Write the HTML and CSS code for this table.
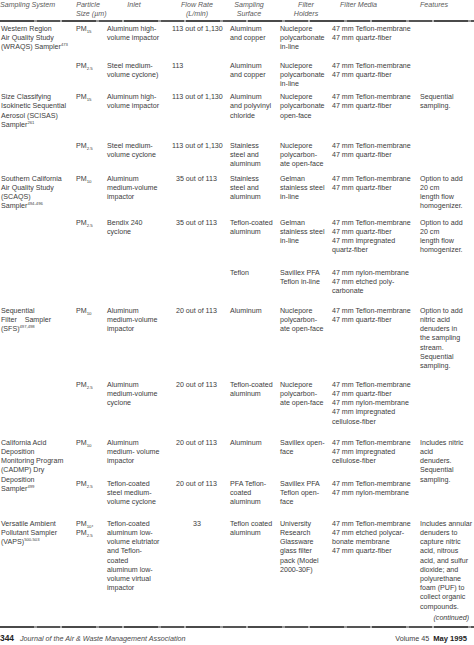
FILE: index.html
```html
<!DOCTYPE html>
<html>
<head>
<meta charset="utf-8">
<link rel="stylesheet" href="styles.css">
</head>
<body>
<div class="page">
  <div class="grid head">
    <div class="hc hs">Sampling System</div>
    <div class="hc hp">Particle<br>Size (µm)</div>
    <div class="hc hi">Inlet</div>
    <div class="hc hf">Flow Rate<br>(L/min)</div>
    <div class="hc hsu">Sampling<br>Surface</div>
    <div class="hc hh">Filter<br>Holders</div>
    <div class="hc hm">Filter Media</div>
    <div class="hc hfe">Features</div>
  </div>
  <div class="rule"></div>
  <div class="grid body">
    <!-- R1 -->
    <div class="c sys">Western Region<br>Air Quality Study<br>(WRAQS) Sampler<sup>473</sup></div>
    <div class="c">PM<sub>15</sub></div>
    <div class="c">Aluminum high-<br>volume impactor</div>
    <div class="c">113 out of 1,130</div>
    <div class="c">Aluminum<br>and copper</div>
    <div class="c">Nuclepore<br>polycarbonate<br>in-line</div>
    <div class="c">47 mm Teflon-membrane<br>47 mm quartz-fiber</div>
    <div class="c"></div>
    <!-- R2 -->
    <div class="c sys"></div>
    <div class="c">PM<sub>2.5</sub></div>
    <div class="c">Steel medium-<br>volume cyclone)</div>
    <div class="c">113</div>
    <div class="c">Aluminum<br>and copper</div>
    <div class="c">Nuclepore<br>polycarbonate<br>in-line</div>
    <div class="c">47 mm Teflon-membrane<br>47 mm quartz-fiber</div>
    <div class="c"></div>
    <!-- R3 -->
    <div class="c sys">Size Classifying<br>Isokinetic Sequential<br>Aerosol (SCISAS)<br>Sampler<sup>261</sup></div>
    <div class="c">PM<sub>15</sub></div>
    <div class="c">Aluminum high-<br>volume impactor</div>
    <div class="c">113 out of 1,130</div>
    <div class="c">Aluminum<br>and polyvinyl<br>chloride</div>
    <div class="c">Nuclepore<br>polycarbonate<br>open-face</div>
    <div class="c">47 mm Teflon-membrane<br>47 mm quartz-fiber</div>
    <div class="c">Sequential<br>sampling.</div>
    <!-- R4 -->
    <div class="c sys"></div>
    <div class="c">PM<sub>2.5</sub></div>
    <div class="c">Steel medium-<br>volume cyclone</div>
    <div class="c">113 out of 1,130</div>
    <div class="c">Stainless<br>steel and<br>aluminum</div>
    <div class="c">Nuclepore<br>polycarbon-<br>ate open-face</div>
    <div class="c">47 mm Teflon-membrane<br>47 mm quartz-fiber</div>
    <div class="c"></div>
    <!-- R5 -->
    <div class="c sys">Southern California<br>Air Quality Study<br>(SCAQS)<br>Sampler<sup>494-496</sup></div>
    <div class="c">PM<sub>10</sub></div>
    <div class="c">Aluminum<br>medium-volume<br>impactor</div>
    <div class="c ind">35 out of 113</div>
    <div class="c">Stainless<br>steel and<br>aluminum</div>
    <div class="c">Gelman<br>stainless steel<br>in-line</div>
    <div class="c">47 mm Teflon-membrane<br>47 mm quartz-fiber</div>
    <div class="c">Option to add<br>20 cm<br>length flow<br>homogenizer.</div>
    <!-- R6 -->
    <div class="c sys"></div>
    <div class="c">PM<sub>2.5</sub></div>
    <div class="c">Bendix 240<br>cyclone</div>
    <div class="c ind">35 out of 113</div>
    <div class="c">Teflon-coated<br>aluminum</div>
    <div class="c">Gelman<br>stainless steel<br>in-line</div>
    <div class="c">47 mm Teflon-membrane<br>47 mm quartz-fiber<br>47 mm impregnated<br>quartz-fiber</div>
    <div class="c">Option to add<br>20 cm<br>length flow<br>homogenizer.</div>
    <!-- R7 -->
    <div class="c sys"></div>
    <div class="c"></div>
    <div class="c"></div>
    <div class="c"></div>
    <div class="c">Teflon</div>
    <div class="c">Savillex PFA<br>Teflon in-line</div>
    <div class="c">47 mm nylon-membrane<br>47 mm etched poly-<br>carbonate</div>
    <div class="c"></div>
    <!-- R8 -->
    <div class="c sys">Sequential<br>Filter&nbsp;&nbsp;&nbsp;&nbsp;Sampler<br>(SFS)<sup>497,498</sup></div>
    <div class="c">PM<sub>10</sub></div>
    <div class="c">Aluminum<br>medium-volume<br>impactor</div>
    <div class="c ind">20 out of 113</div>
    <div class="c">Aluminum</div>
    <div class="c">Nuclepore<br>polycarbon-<br>ate open-face</div>
    <div class="c">47 mm Teflon-membrane<br>47 mm quartz-fiber</div>
    <div class="c">Option to add<br>nitric acid<br>denuders in<br>the sampling<br>stream.<br>Sequential<br>sampling.</div>
    <!-- R9 -->
    <div class="c sys"></div>
    <div class="c">PM<sub>2.5</sub></div>
    <div class="c">Aluminum<br>medium-volume<br>cyclone</div>
    <div class="c ind">20 out of 113</div>
    <div class="c">Teflon-coated<br>aluminum</div>
    <div class="c">Nuclepore<br>polycarbon-<br>ate open-face</div>
    <div class="c">47 mm Teflon-membrane<br>47 mm quartz-fiber<br>47 mm nylon-membrane<br>47 mm impregnated<br>cellulose-fiber</div>
    <div class="c"></div>
    <!-- R10 -->
    <div class="c sys span2">California Acid<br>Deposition<br>Monitoring Program<br>(CADMP) Dry<br>Deposition<br>Sampler<sup>499</sup></div>
    <div class="c">PM<sub>10</sub></div>
    <div class="c">Aluminum<br>medium- volume<br>impactor</div>
    <div class="c ind">20 out of 113</div>
    <div class="c">Aluminum</div>
    <div class="c">Savillex open-<br>face</div>
    <div class="c">47 mm Teflon-membrane<br>47 mm impregnated<br>cellulose-fiber</div>
    <div class="c">Includes nitric<br>acid<br>denuders.<br>Sequential<br>sampling.</div>
    <!-- R11 -->
    <div class="c">PM<sub>2.5</sub></div>
    <div class="c">Teflon-coated<br>steel medium-<br>volume cyclone</div>
    <div class="c ind">20 out of 113</div>
    <div class="c">PFA Teflon-<br>coated<br>aluminum</div>
    <div class="c">Savillex PFA<br>Teflon open-<br>face</div>
    <div class="c">47 mm Teflon-membrane<br>47 mm nylon-membrane</div>
    <div class="c"></div>
    <!-- R12 -->
    <div class="c sys">Versatile Ambient<br>Pollutant Sampler<br>(VAPS)<sup>500-503</sup></div>
    <div class="c">PM<sub>10</sub>,<br>PM<sub>2.5</sub></div>
    <div class="c">Teflon-coated<br>aluminum low-<br>volume elutriator<br>and Teflon-<br>coated<br>aluminum low-<br>volume virtual<br>impactor</div>
    <div class="c ctr">33</div>
    <div class="c">Teflon coated<br>aluminum</div>
    <div class="c">University<br>Research<br>Glassware<br>glass filter<br>pack (Model<br>2000-30F)</div>
    <div class="c">47 mm Teflon-membrane<br>47 mm etched polycar-<br>bonate membrane<br>47 mm quartz-fiber</div>
    <div class="c">Includes annular<br>denuders to<br>capture nitric<br>acid, nitrous<br>acid, and sulfur<br>dioxide; and<br>polyurethane<br>foam (PUF) to<br>collect organic<br>compounds.</div>
  </div>
  <div class="cont">(continued)</div>
  <div class="rule rule2"></div>
  <div class="footer">
    <div class="fl"><b class="pg">344</b><i>Journal of the Air &amp; Waste Management Association</i></div>
    <div class="fr">Volume 45&nbsp;&nbsp;<b>May 1995</b></div>
  </div>
</div>
</body>
</html>
```
FILE: styles.css
```css
html, body {
  margin: 0;
  padding: 0;
  background: #ffffff;
}
.page {
  width: 474px;
  height: 645px;
  overflow: hidden;
  font-family: "Liberation Sans", Arial, sans-serif;
  font-size: 7.1px;
  line-height: 9.2px;
  color: #3c3c3c;
}
.grid {
  display: grid;
  grid-template-columns: 76px 31px 65px 58px 50px 52px 88px 54px;
}
.head {
  height: 20px;
  font-style: italic;
  color: #5a5a5a;
  line-height: 9px;
  padding-top: 0.5px;
  box-sizing: border-box;
}
.hc { white-space: nowrap; }
.hs { padding-left: 0; }
.hp { text-align: center; padding-right: 7px; }
.hi { text-align: center; padding-right: 11px; }
.hf { text-align: center; padding-right: 8px; }
.hsu { text-align: center; padding-right: 12px; }
.hh { text-align: center; }
.hm { padding-left: 8px; }
.hfe { padding-left: 0; }
.rule {
  height: 1.6px;
  background: repeating-linear-gradient(90deg, #4a4a4a 0 34px, #9a9a9a 34px 37px, #555 37px 60px, #b0b0b0 60px 62px);
}
.body {
  margin-top: 3.2px;
  grid-template-rows: 37px 31.5px 48.5px 33px 44px 50px 38px 74px 58px 41px 40px 94px;
}
.c {
  white-space: nowrap;
  overflow: visible;
}
.sys { padding-left: 1px; }
.span2 { grid-row: span 2; }
.ind { padding-left: 4px; }
.ctr { padding-left: 21px; }
sub {
  font-size: 4.4px;
  line-height: 0;
  vertical-align: -1.6px;
}
sup {
  font-size: 4.2px;
  line-height: 0;
  vertical-align: 3px;
}
.cont {
  text-align: right;
  font-style: italic;
  padding-right: 5px;
  height: 9.2px;
}
.rule2 {
  margin-top: 3px;
  height: 2px;
}
.footer {
  display: flex;
  justify-content: space-between;
  margin-top: 6px;
  font-size: 7.2px;
}
.fl i { font-style: italic; color: #4a4a4a; }
.pg {
  font-size: 8.4px;
  color: #222;
  margin-right: 6px;
}
.fr { padding-right: 7px; }
.fr b { font-size: 7.6px; color: #222; }
```
